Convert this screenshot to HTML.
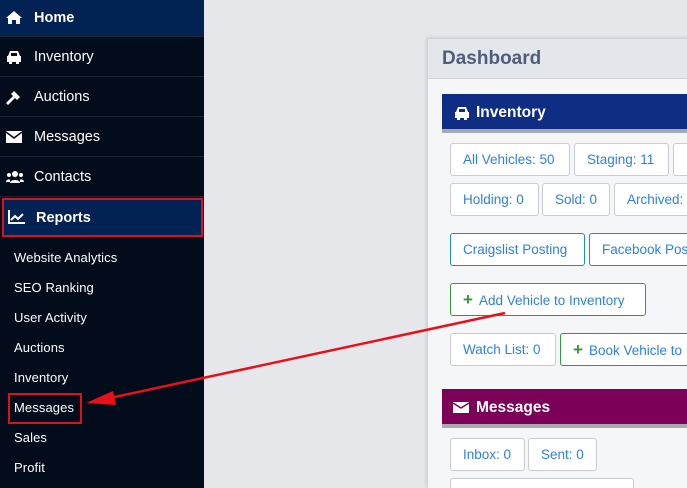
<!DOCTYPE html>
<html><head><style>
*{box-sizing:border-box;margin:0;padding:0}
html,body{width:687px;height:488px;overflow:hidden}
body{background:#e5e7eb;font-family:"Liberation Sans",sans-serif;position:relative}
.sb{position:absolute;left:0;top:0;width:204px;height:488px;background:#020c1a}
.it{position:absolute;left:0;width:204px;height:39px;border-bottom:1px solid #1c2535;color:#fff;font-size:14.5px;display:flex;align-items:center;padding-left:34px}
.it svg{position:absolute;left:5px;top:12px}
.sub{position:absolute;left:14px;color:#fff;font-size:13px;letter-spacing:.1px}
.card{position:absolute;left:427px;top:38px;width:270px;height:450px;background:#f5f6f8;border:1px solid #cfd3d8;border-bottom:none;box-shadow:0 0 4px rgba(0,0,0,.15)}
.ch{height:40px;background:#e3e6ea;border-bottom:1px solid #cfd3d8;color:#505d7a;font-size:19px;font-weight:bold;padding:9px 0 0 14px}
.hd{position:absolute;left:442px;width:260px;height:39px;color:#fff;font-weight:bold;font-size:15.5px;padding:10px 0 0 34px;border-bottom:4px solid #a6a9ad}
.hd svg{position:absolute;left:11px;top:12px}
.b{position:absolute;height:33px;border:1px solid #c8cbcf;border-radius:3px;background:#fff;color:#2f7fe0;font-size:13.5px;padding:8px 0 0 12px;white-space:nowrap;overflow:hidden}
.t{border-color:#1e93a8}.g{border-color:#2e9a3a}
.g b{color:#2e9a3a;font-size:17px;margin-right:6px}
</style></head><body>
<div class="sb">
<div class="it" style="top:0;background:#022253;font-weight:bold;height:37px"><svg width="18" height="15" viewBox="0 0 18 15" style="top:10px"><path d="M9 1 1 8h2v6h4v-4h4v4h4V8h2z" fill="#fff"/></svg>Home</div>
<div class="it" style="top:38px"><svg width="18" height="14" viewBox="0 0 18 14"><path d="M3 6 5 1h8l2 5h1v6h-2v2h-3v-2H7v2H4v-2H2V6z" fill="#fff"/><rect x="6" y="3" width="6" height="3" fill="#020c1a"/></svg>Inventory</div>
<div class="it" style="top:78px"><svg width="18" height="16" viewBox="0 0 18 16"><path d="M9 1l6 6-3 3-2-2-7 7-2-2 7-7-2-2z" fill="#fff"/></svg>Auctions</div>
<div class="it" style="top:118px"><svg width="18" height="14" viewBox="0 0 18 14"><rect x="1" y="1" width="16" height="12" fill="#fff"/><path d="M1 2l8 6 8-6" stroke="#020c1a" stroke-width="1.5" fill="none"/></svg>Messages</div>
<div class="it" style="top:158px"><svg width="20" height="14" viewBox="0 0 20 14"><circle cx="10" cy="4" r="3" fill="#fff"/><circle cx="4" cy="5" r="2" fill="#fff"/><circle cx="16" cy="5" r="2" fill="#fff"/><path d="M5 13c0-4 10-4 10 0zM1 12c0-3 4-3 4-2v2zM19 12c0-3-4-3-4-2v2z" fill="#fff"/></svg>Contacts</div>
<div class="it" style="top:198px;height:39px;background:#022253;border:2px solid #e0101a;font-weight:bold;left:2px;width:201px;padding-left:32px"><svg width="18" height="14" viewBox="0 0 18 14" style="left:4px;top:10px"><path d="M1 0v13h16" stroke="#fff" stroke-width="2" fill="none"/><path d="M3 10l4-4 3 3 5-5" stroke="#fff" stroke-width="2" fill="none"/></svg>Reports</div>
<div class="sub" style="top:250px">Website Analytics</div>
<div class="sub" style="top:280px">SEO Ranking</div>
<div class="sub" style="top:310px">User Activity</div>
<div class="sub" style="top:340px">Auctions</div>
<div class="sub" style="top:370px">Inventory</div>
<div class="sub" style="top:400px">Messages</div>
<div style="position:absolute;left:8px;top:393px;width:74px;height:31px;border:2px solid #e0101a"></div>
<div class="sub" style="top:430px">Sales</div>
<div class="sub" style="top:460px">Profit</div>
</div>
<div class="card"><div class="ch">Dashboard</div></div>
<div class="hd" style="top:94px;background:#0e2d83"><svg width="18" height="14" viewBox="0 0 18 14"><path d="M3 6 5 1h8l2 5h1v6h-2v2h-3v-2H7v2H4v-2H2V6z" fill="#fff"/><rect x="6" y="3" width="6" height="3" fill="#0e2d83"/></svg>Inventory</div>
<div class="b" style="left:450px;top:143px;width:120px">All Vehicles: 50</div>
<div class="b" style="left:574px;top:143px;width:95px">Staging: 11</div>
<div class="b" style="left:673px;top:143px;width:30px"></div>
<div class="b" style="left:450px;top:183px;width:89px">Holding: 0</div>
<div class="b" style="left:542px;top:183px;width:68px">Sold: 0</div>
<div class="b" style="left:614px;top:183px;width:90px">Archived: 0</div>
<div class="b t" style="left:450px;top:233px;width:135px">Craigslist Posting</div>
<div class="b t" style="left:589px;top:233px;width:110px">Facebook Posting</div>
<div class="b g" style="left:450px;top:283px;width:196px;padding-top:6px"><b>+</b>Add Vehicle to Inventory</div>
<div class="b" style="left:450px;top:333px;width:106px">Watch List: 0</div>
<div class="b g" style="left:560px;top:333px;width:140px;padding-top:6px"><b>+</b>Book Vehicle to</div>
<div class="hd" style="top:389px;background:#7d0058"><svg width="16" height="13" viewBox="0 0 16 13"><rect x="0" y="1" width="16" height="11" fill="#fff"/><path d="M0 2l8 5 8-5" stroke="#7d0058" stroke-width="1.5" fill="none"/></svg>Messages</div>
<div class="b" style="left:450px;top:438px;width:75px">Inbox: 0</div>
<div class="b" style="left:528px;top:438px;width:69px">Sent: 0</div>
<div class="b" style="left:450px;top:478px;width:184px"></div>
<svg style="position:absolute;left:0;top:0" width="687" height="488"><line x1="505" y1="313" x2="110" y2="398" stroke="#e8101a" stroke-width="2.5"/><polygon points="86,403 113,391 116,405" fill="#e8101a"/></svg>
</body></html>
